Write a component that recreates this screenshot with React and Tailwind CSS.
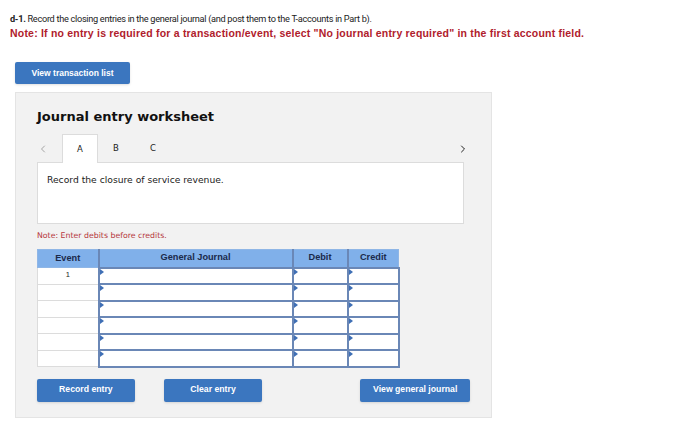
import { ChevronLeft, ChevronRight } from 'lucide-react';

const rows = [1, 2, 3, 4, 5, 6];

function InputCell() {
  return (
    <td className="relative border-2 border-[#6a87b6] bg-white p-0">
      <span className="absolute left-0 top-0 w-0 h-0 border-t-[3px] border-b-[3px] border-l-[4px] border-t-transparent border-b-transparent border-l-[#3f6fb5]" />
    </td>
  );
}

export default function App() {
  return (
    <div className="w-[700px] h-[446px] bg-white font-['Liberation_Sans',Arial,sans-serif] text-[#222]">
      <div className="pl-[10px] pt-[12px] leading-[14px]">
        <p className="font-['Roboto',Arial,sans-serif] text-[9.2px] tracking-[-0.3px]">
          <span className="font-bold">d-1.</span> Record the closing entries in the general journal (and post them to the T-accounts in Part b).
        </p>
        <p className="text-[10.5px] font-bold text-[#b0202c] tracking-[0.2px]">
          Note: If no entry is required for a transaction/event, select "No journal entry required" in the first account field.
        </p>
      </div>

      <button className="ml-[15px] mt-[22px] w-[115px] h-[22px] bg-[#3b76bf] rounded-[2px] text-white text-[8.5px] font-bold shadow-sm">
        View transaction list
      </button>

      <div className="ml-[15px] mt-[8px] w-[477px] h-[326px] bg-[#f2f2f2] border border-[#e4e4e4] px-[21px] pt-[15px]">
        <h2 className="font-['DejaVu_Sans',Verdana,sans-serif] font-bold text-[13px] text-[#111] leading-[18px]">
          Journal entry worksheet
        </h2>

        <div className="flex items-end h-[29px] mt-[8px] relative">
          <ChevronLeft className="w-[12px] h-[12px] text-[#8a8a8a] mb-[8px]" strokeWidth={1.5} />
          <div className="ml-[13px] w-[36px] h-[29px] bg-white border border-b-0 border-[#dcdcdc] flex items-center justify-center text-[8.5px] text-[#222] font-['DejaVu_Sans',sans-serif]">
            A
          </div>
          <div className="w-[36px] h-[29px] flex items-center justify-center text-[8.5px] text-[#222] font-['DejaVu_Sans',sans-serif]">
            B
          </div>
          <div className="w-[38px] h-[29px] flex items-center justify-center text-[8.5px] text-[#222] font-['DejaVu_Sans',sans-serif]">
            C
          </div>
          <ChevronRight className="absolute right-[1px] top-[9px] w-[12px] h-[12px] text-[#222]" strokeWidth={2} />
        </div>

        <div className="w-[427px] h-[62px] bg-white border border-[#dcdcdc] -mt-px pl-[9px] pt-[10px]">
          <p className="font-['DejaVu_Sans',Verdana,sans-serif] text-[9.2px] text-[#222]">
            Record the closure of service revenue.
          </p>
        </div>

        <p className="mt-[7px] font-['DejaVu_Sans',Verdana,sans-serif] text-[7.8px] leading-[10px] text-[#b5373c]">
          Note: Enter debits before credits.
        </p>

        <table className="mt-[8px] border-collapse w-[361px] table-fixed">
          <colgroup>
            <col className="w-[61px]" />
            <col className="w-[194px]" />
            <col className="w-[55px]" />
            <col className="w-[51px]" />
          </colgroup>
          <thead>
            <tr className="h-[18px] bg-[#80b0ea] text-[9.2px] font-bold text-[#1b2a4a]">
              <th className="border border-[#8fb6e6] border-r-[#5e7fb3]">Event</th>
              <th className="border-2 border-t border-[#6a87b6] border-t-[#8fb6e6]">General Journal</th>
              <th className="border-2 border-t border-[#6a87b6] border-t-[#8fb6e6]">Debit</th>
              <th className="border-2 border-t border-[#6a87b6] border-t-[#8fb6e6] border-r-[#8fb6e6] border-r">Credit</th>
            </tr>
          </thead>
          <tbody>
            {rows.map((r) => (
              <tr key={r} className="h-[16.5px]">
                <td className="border border-[#dcdcdc] bg-white text-center text-[7.5px] align-top pt-[1px] text-[#222]">
                  {r === 1 ? '1' : ''}
                </td>
                <InputCell />
                <InputCell />
                <InputCell />
              </tr>
            ))}
          </tbody>
        </table>

        <div className="flex mt-[11px] h-[23px]">
          <button className="w-[98px] h-[23px] bg-[#3b76bf] rounded-[2px] text-white text-[8.7px] font-bold shadow-sm">
            Record entry
          </button>
          <button className="ml-[29px] w-[99px] h-[23px] bg-[#3b76bf] rounded-[2px] text-white text-[8.7px] font-bold shadow-sm">
            Clear entry
          </button>
          <button className="ml-[98px] w-[110px] h-[23px] bg-[#3b76bf] rounded-[2px] text-white text-[8.7px] font-bold shadow-sm">
            View general journal
          </button>
        </div>
      </div>
    </div>
  );
}
